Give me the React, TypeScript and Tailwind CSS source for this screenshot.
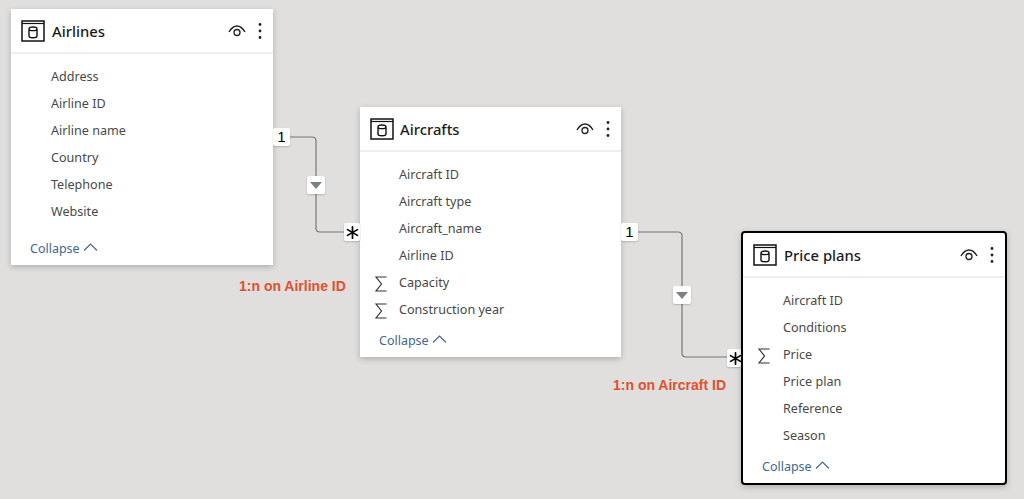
import { Asterisk } from 'lucide-react';

type Field = { name: string; sum?: boolean };

const airlines: Field[] = [
  { name: 'Address' },
  { name: 'Airline ID' },
  { name: 'Airline name' },
  { name: 'Country' },
  { name: 'Telephone' },
  { name: 'Website' },
];

const aircrafts: Field[] = [
  { name: 'Aircraft ID' },
  { name: 'Aircraft type' },
  { name: 'Aircraft_name' },
  { name: 'Airline ID' },
  { name: 'Capacity', sum: true },
  { name: 'Construction year', sum: true },
];

const pricePlans: Field[] = [
  { name: 'Aircraft ID' },
  { name: 'Conditions' },
  { name: 'Price', sum: true },
  { name: 'Price plan' },
  { name: 'Reference' },
  { name: 'Season' },
];

function TableIcon() {
  return (
    <svg width="24" height="22" viewBox="0 0 24 22" fill="none" stroke="#111" className="shrink-0">
      <rect x="1" y="1" width="22" height="20" strokeWidth="1.5" />
      <path d="M1 3.5h22" strokeWidth="1.2" />
      <path d="M8 9c0-2.6 8-2.6 8 0v7c0 2.4-8 2.4-8 0zM8 9c0 2.2 8 2.2 8 0" strokeWidth="1.4" />
    </svg>
  );
}

function EyeIcon() {
  return (
    <svg width="18" height="12" viewBox="0 0 18 12" fill="none" stroke="#222" className="ml-auto shrink-0">
      <path d="M1 7C3.5 2.8 6 1 9 1s5.5 1.8 8 6" strokeWidth="1.4" />
      <circle cx="9" cy="7.5" r="3" strokeWidth="1.3" />
    </svg>
  );
}

function KebabIcon() {
  return (
    <svg width="4" height="16" viewBox="0 0 4 16" fill="#222" className="ml-[12px] shrink-0">
      <circle cx="2" cy="1.5" r="1.4" />
      <circle cx="2" cy="8" r="1.4" />
      <circle cx="2" cy="14.5" r="1.4" />
    </svg>
  );
}

function SigmaIcon() {
  return (
    <svg width="12" height="16" viewBox="0 0 12 16" fill="none" stroke="#333" strokeWidth="1.2" className="absolute left-[15px]">
      <path d="M11.5 1H1l5.5 7L1 15h10.5" />
    </svg>
  );
}

function ChevronIcon() {
  return (
    <svg width="15" height="8" viewBox="0 0 15 8" fill="none" stroke="#44668c" strokeWidth="1.1" className="ml-[3px] -translate-y-[2px]">
      <path d="M1 7.5 7.5 1 14 7.5" />
    </svg>
  );
}

function TableCard({
  title,
  fields,
  className,
  rowPad,
  titleGap,
  collapseGap,
}: {
  title: string;
  fields: Field[];
  className: string;
  rowPad: string;
  titleGap: string;
  collapseGap: string;
}) {
  return (
    <div className={`absolute flex flex-col bg-white shadow-[0_2px_6px_rgba(0,0,0,0.22)] ${className}`}>
      <div className="flex h-[45px] items-center border-b-2 border-[#efefef] pl-[10px] pr-[11px] pt-[1px]">
        <TableIcon />
        <span className={`text-[14.8px] font-medium text-[#1c1c1c] ${titleGap}`}>{title}</span>
        <EyeIcon />
        <KebabIcon />
      </div>
      <div className="flex flex-col pt-[10px]">
        {fields.map((f) => (
          <div key={f.name} className={`relative flex h-[27px] items-center text-[12.6px] text-[#484848] ${rowPad}`}>
            {f.sum && <SigmaIcon />}
            {f.name}
          </div>
        ))}
      </div>
      <div className={`flex items-center pl-[19px] text-[12.5px] text-[#44668c] ${collapseGap}`}>
        Collapse
        <ChevronIcon />
      </div>
    </div>
  );
}

function Badge({ children, className }: { children: React.ReactNode; className: string }) {
  return (
    <div className={`absolute flex items-center justify-center rounded-[2px] bg-white text-black shadow-[0_1px_2px_rgba(0,0,0,0.2)] ${className}`}>
      {children}
    </div>
  );
}

function Arrow({ className }: { className: string }) {
  return (
    <Badge className={`h-[18px] w-[18px] ${className}`}>
      <div className="h-0 w-0 border-x-[6.5px] border-t-[7px] border-x-transparent border-t-[#808080]" />
    </Badge>
  );
}

export default function App() {
  return (
    <div className="relative h-[499px] w-[1024px] overflow-hidden bg-[#e1dfdd] font-['Noto_Sans',sans-serif]">
      <svg className="absolute inset-0" width="1024" height="499" fill="none" stroke="#777" strokeWidth="1.2">
        <path d="M290 137h22q4 0 4 4v87q0 4 4 4h24" />
        <path d="M638 232h40q4 0 4 4v117q0 4 4 4h41" />
      </svg>

      <Badge className="left-[727px] top-[349px] h-[18px] w-[16px]">
        <Asterisk className="h-[23px] w-[23px] shrink-0" strokeWidth={1.8} />
      </Badge>

      <TableCard
        title="Airlines"
        fields={airlines}
        className="left-[11px] top-[9px] h-[256px] w-[262px]"
        rowPad="pl-[40px]"
        titleGap="ml-[7px]"
        collapseGap="mt-[14px]"
      />
      <TableCard
        title="Aircrafts"
        fields={aircrafts}
        className="left-[360px] top-[107px] h-[250px] w-[261px]"
        rowPad="pl-[39px]"
        titleGap="ml-[6px]"
        collapseGap="mt-[8px]"
      />
      <TableCard
        title="Price plans"
        fields={pricePlans}
        className="left-[741px] top-[231px] h-[254px] w-[266px] rounded-[4px] border-2 border-black"
        rowPad="pl-[40px]"
        titleGap="ml-[7px]"
        collapseGap="mt-[8px]"
      />

      <Badge className="left-[273px] top-[128px] h-[18px] w-[17px] font-['Liberation_Sans',sans-serif] text-[15px]">1</Badge>
      <Badge className="left-[621px] top-[223px] h-[18px] w-[17px] font-['Liberation_Sans',sans-serif] text-[15px]">1</Badge>
      <Arrow className="left-[307px] top-[176px]" />
      <Arrow className="left-[673px] top-[286px]" />
      <Badge className="left-[344px] top-[223px] h-[18px] w-[16px]">
        <Asterisk className="h-[23px] w-[23px] shrink-0" strokeWidth={1.8} />
      </Badge>

      <div className="absolute left-[239px] top-[276px] font-['Liberation_Sans',sans-serif] text-[14px] font-bold text-[#e2502f]">
        1:n on Airline ID
      </div>
      <div className="absolute left-[613px] top-[375px] font-['Liberation_Sans',sans-serif] text-[14px] font-bold text-[#e2502f]">
        1:n on Aircraft ID
      </div>
    </div>
  );
}
